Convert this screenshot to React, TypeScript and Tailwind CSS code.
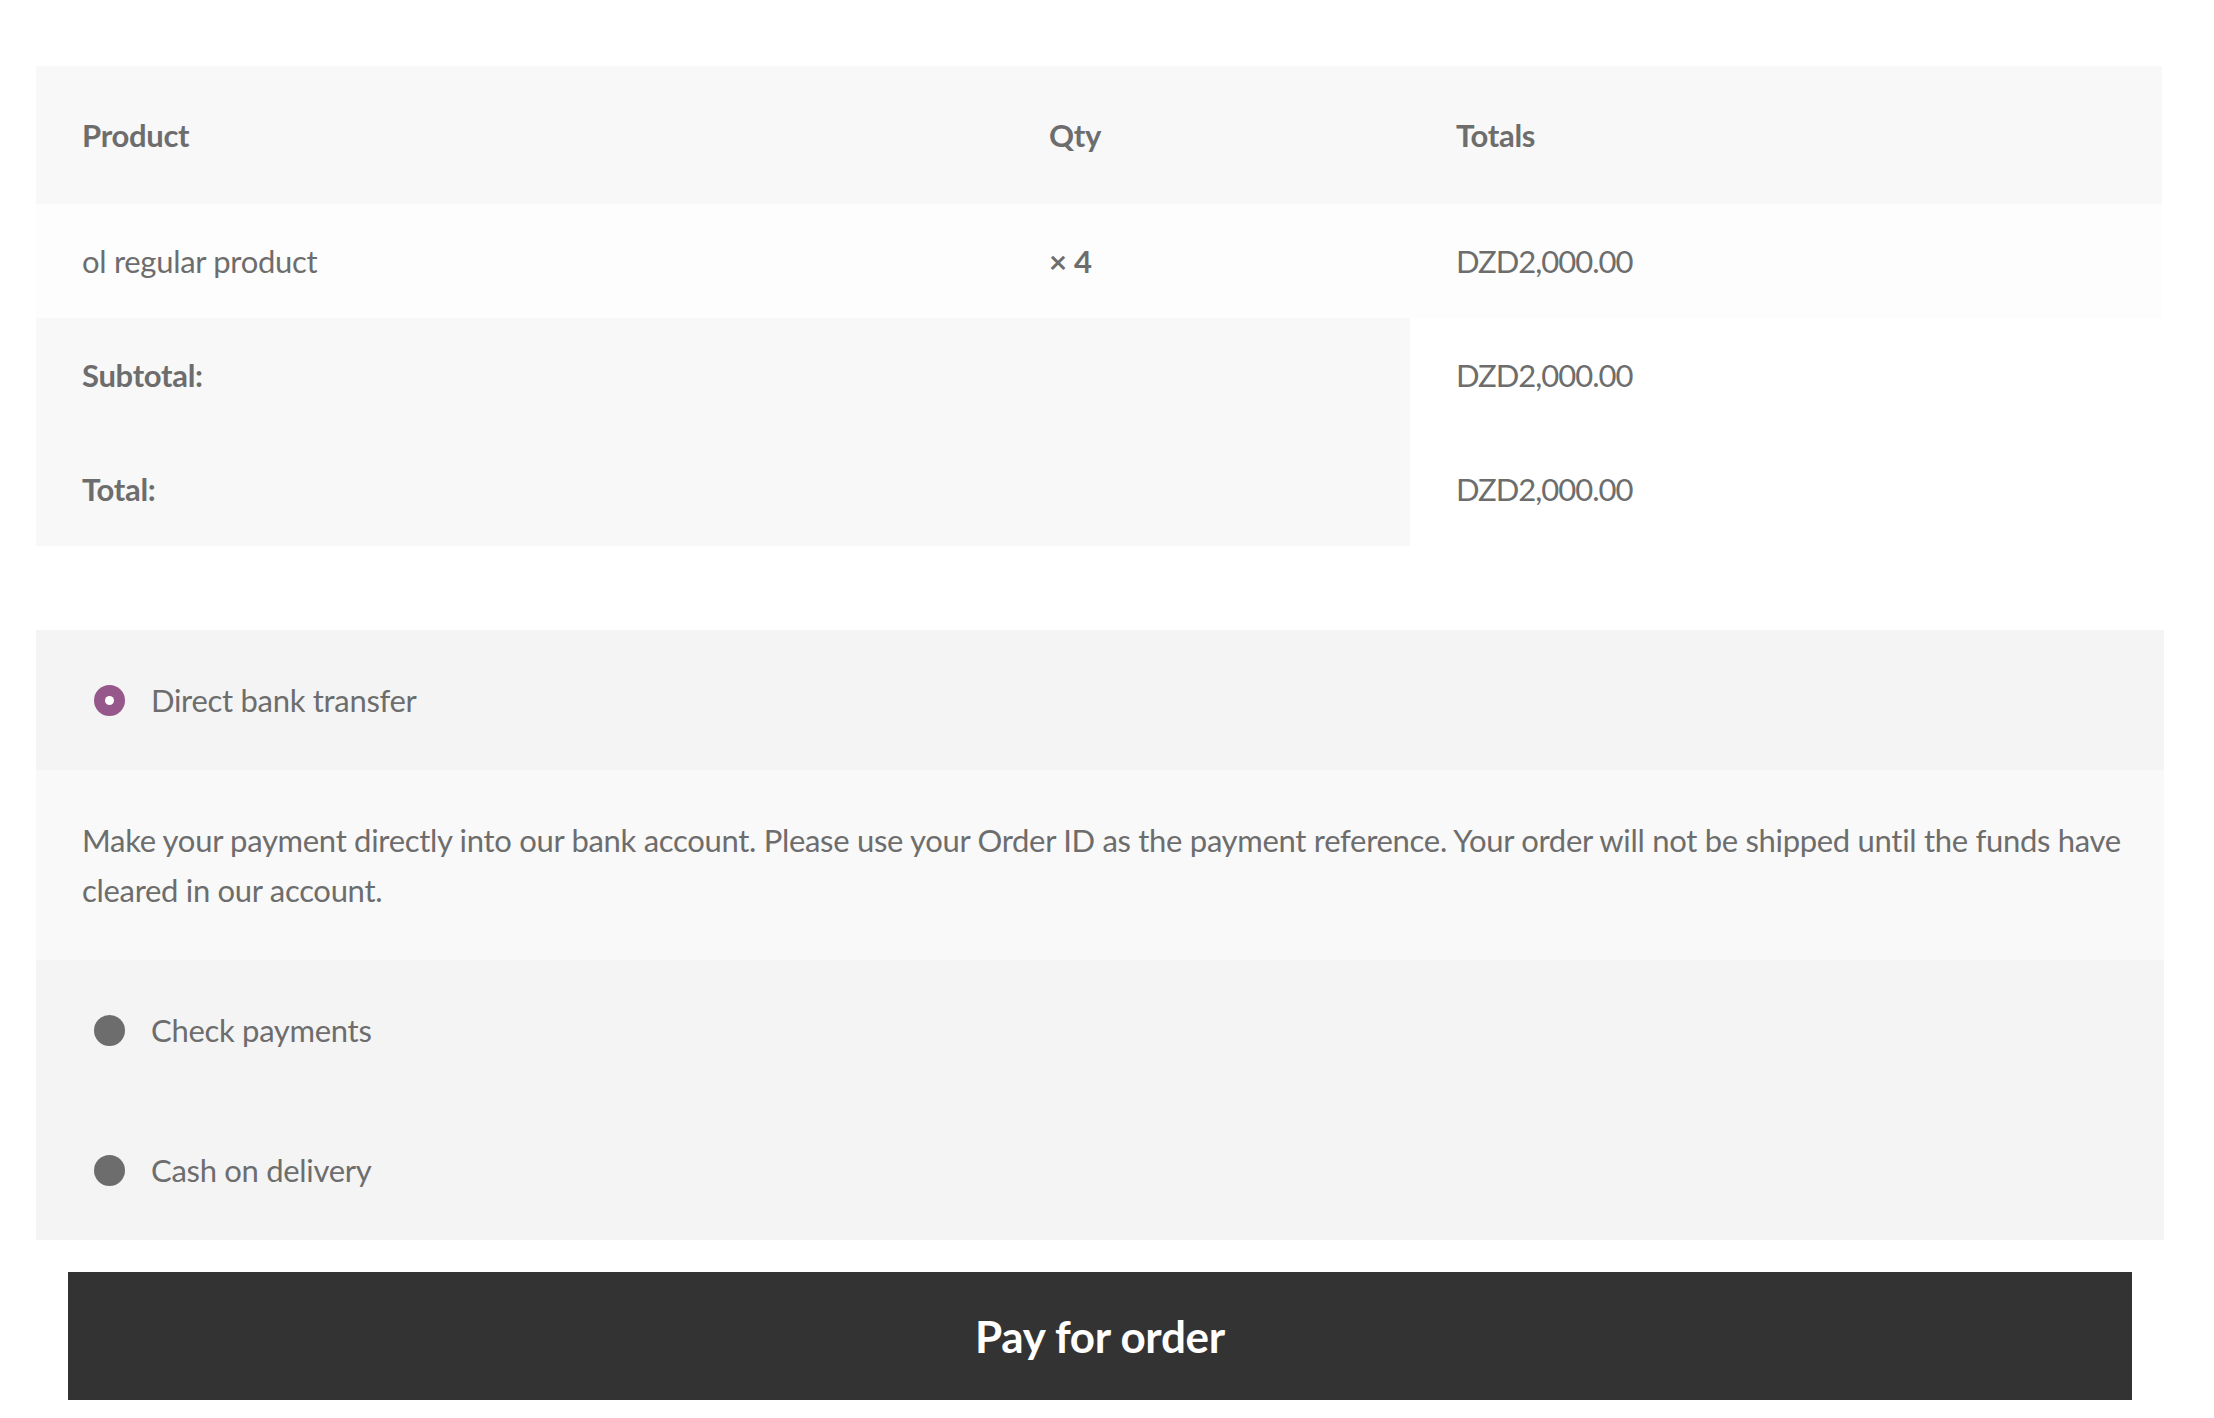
import React from 'react';

// order-pay summary + payment methods
const rows = [
  { name: 'ol regular product', qty: '× 4', total: 'DZD2,000.00' },
];

const totals = [
  { label: 'Subtotal:', value: 'DZD2,000.00' },
  { label: 'Total:', value: 'DZD2,000.00' },
];

const methods = [
  { id: 'bacs', label: 'Direct bank transfer', checked: true },
  { id: 'cheque', label: 'Check payments', checked: false },
  { id: 'cod', label: 'Cash on delivery', checked: false },
];

function Radio({ checked }: { checked: boolean }) {
  return checked ? (
    <span className="w-[31px] h-[31px] rounded-full bg-[#96588a] flex items-center justify-center shrink-0">
      <span className="w-[9px] h-[9px] rounded-full bg-white" />
    </span>
  ) : (
    <span className="w-[31px] h-[31px] rounded-full bg-[#6d6d6d] shrink-0" />
  );
}

export default function App() {
  return (
    <div
      className="min-h-screen bg-white text-[#6d6d6d] text-[31px] tracking-[-0.3px] pt-[66px] pl-[36px]"
      style={{ fontFamily: 'Lato, "Noto Sans", sans-serif' }}
    >
      <table className="w-[2126px] table-fixed border-collapse">
        <colgroup>
          <col className="w-[967px]" />
          <col className="w-[407px]" />
          <col className="w-[752px]" />
        </colgroup>
        <thead>
          <tr>
            <th className="h-[138px] bg-[#f8f8f8] px-[46px] text-left font-bold">Product</th>
            <th className="h-[138px] bg-[#f8f8f8] px-[46px] text-left font-bold">Qty</th>
            <th className="h-[138px] bg-[#f8f8f8] px-[46px] text-left font-bold">Totals</th>
          </tr>
        </thead>
        <tbody>
          {rows.map((r) => (
            <tr key={r.name}>
              <td className="h-[114px] bg-[#fdfdfd] px-[46px]">{r.name}</td>
              <td className="h-[114px] bg-[#fdfdfd] px-[46px] font-bold">{r.qty}</td>
              <td className="h-[114px] bg-[#fdfdfd] px-[46px] tracking-[-1px]">{r.total}</td>
            </tr>
          ))}
        </tbody>
        <tfoot>
          {totals.map((t) => (
            <tr key={t.label}>
              <th colSpan={2} className="h-[114px] bg-[#f8f8f8] px-[46px] text-left font-bold">
                {t.label}
              </th>
              <td className="h-[114px] bg-white px-[46px] tracking-[-1px]">{t.value}</td>
            </tr>
          ))}
        </tfoot>
      </table>

      <div className="w-[2128px] mt-[84px]">
        <ul className="bg-[#f4f4f4]">
          {methods.map((m) => (
            <li key={m.id}>
              <div className="h-[140px] flex items-center gap-[26px] pl-[58px]">
                <Radio checked={m.checked} />
                <span>{m.label}</span>
              </div>
              {m.id === 'bacs' && (
                <div className="bg-[#f9f9f9] px-[46px] py-[45px] leading-[50px]">
                  <p>
                    <span className="whitespace-nowrap">
                      Make your payment directly into our bank account. Please use your Order ID as the payment reference. Your order will not be shipped until the funds have
                    </span>
                    <br />
                    cleared in our account.
                  </p>
                </div>
              )}
            </li>
          ))}
        </ul>

        <div className="pt-[32px] pl-[32px]">
          <button className="w-[2064px] h-[128px] bg-[#333333] text-white font-bold text-[44px] tracking-[-0.3px] flex items-center justify-center">
            Pay for order
          </button>
        </div>
      </div>
    </div>
  );
}
